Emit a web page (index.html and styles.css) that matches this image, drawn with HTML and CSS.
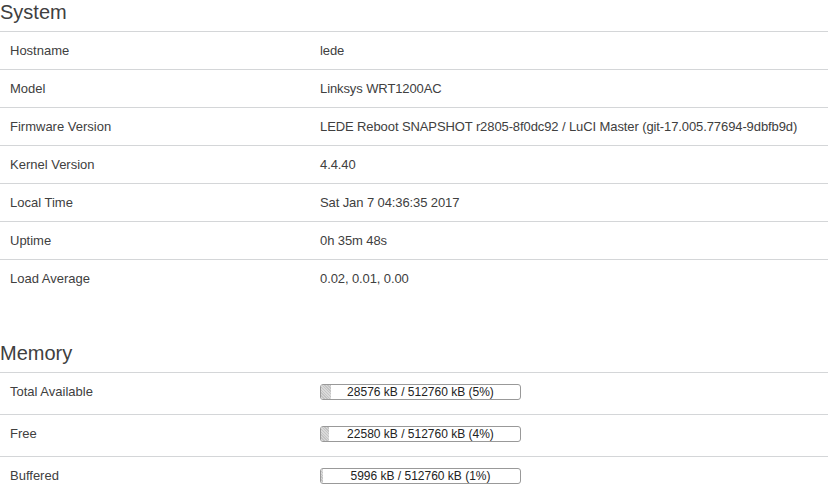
FILE: index.html
```
<!DOCTYPE html>
<html>
<head>
<meta charset="utf-8">
<link rel="stylesheet" href="styles.css">
</head>
<body>
<section class="section">
  <h2 class="legend">System</h2>
  <div class="table">
    <div class="row"><div class="label">Hostname</div><div class="value">lede</div></div>
    <div class="row"><div class="label">Model</div><div class="value">Linksys WRT1200AC</div></div>
    <div class="row"><div class="label">Firmware Version</div><div class="value">LEDE Reboot SNAPSHOT r2805-8f0dc92 / LuCI Master (git-17.005.77694-9dbfb9d)</div></div>
    <div class="row"><div class="label">Kernel Version</div><div class="value">4.4.40</div></div>
    <div class="row"><div class="label">Local Time</div><div class="value">Sat Jan 7 04:36:35 2017</div></div>
    <div class="row"><div class="label">Uptime</div><div class="value">0h 35m 48s</div></div>
    <div class="row"><div class="label">Load Average</div><div class="value">0.02, 0.01, 0.00</div></div>
  </div>
</section>
<section class="section memory">
  <h2 class="legend">Memory</h2>
  <div class="table">
    <div class="row mem"><div class="label">Total Available</div><div class="value"><div class="bar"><div class="fill" style="width:5%"></div><span class="bar-text">28576 kB / 512760 kB (5%)</span></div></div></div>
    <div class="row mem"><div class="label">Free</div><div class="value"><div class="bar"><div class="fill" style="width:4%"></div><span class="bar-text">22580 kB / 512760 kB (4%)</span></div></div></div>
    <div class="row mem"><div class="label">Buffered</div><div class="value"><div class="bar"><div class="fill" style="width:1%"></div><span class="bar-text">5996 kB / 512760 kB (1%)</span></div></div></div>
  </div>
</section>
</body>
</html>
```
FILE: styles.css
```
html, body {
  margin: 0;
  padding: 0;
  background: #fff;
}
body {
  font-family: "Liberation Sans", Arial, sans-serif;
  color: #404040;
  font-size: 13px;
  overflow: hidden;
}
.section {
  width: 828px;
}
.memory {
  margin-top: 44px;
}
.legend {
  margin: 0;
  font-weight: normal;
  font-size: 20px;
  line-height: 24px;
  padding-bottom: 7px;
  color: #404040;
}
.row {
  display: grid;
  grid-template-columns: 320px 1fr;
  align-items: center;
  border-top: 1px solid #d4d6d8;
  padding: 9px 0 9px 0;
  line-height: 19px;
}
.row.mem {
  padding: 9px 0 12px 0;
  line-height: 20px;
}
.label {
  padding-left: 10px;
}
.value {
  letter-spacing: -0.1px;
}
.bar {
  position: relative;
  width: 201px;
  height: 16px;
  box-sizing: border-box;
  border: 1px solid #999;
  border-radius: 3px;
  overflow: hidden;
  background: #fff;
  letter-spacing: 0;
}
.fill {
  height: 100%;
  background-color: #cfcfcf;
  background-image: repeating-linear-gradient(45deg, #c4c4c4 0 1px, #dadada 1px 2px);
}
.bar-text {
  position: absolute;
  left: 0;
  right: 0;
  top: 0;
  text-align: center;
  font-size: 12px;
  line-height: 14px;
  color: #222;
}
```
